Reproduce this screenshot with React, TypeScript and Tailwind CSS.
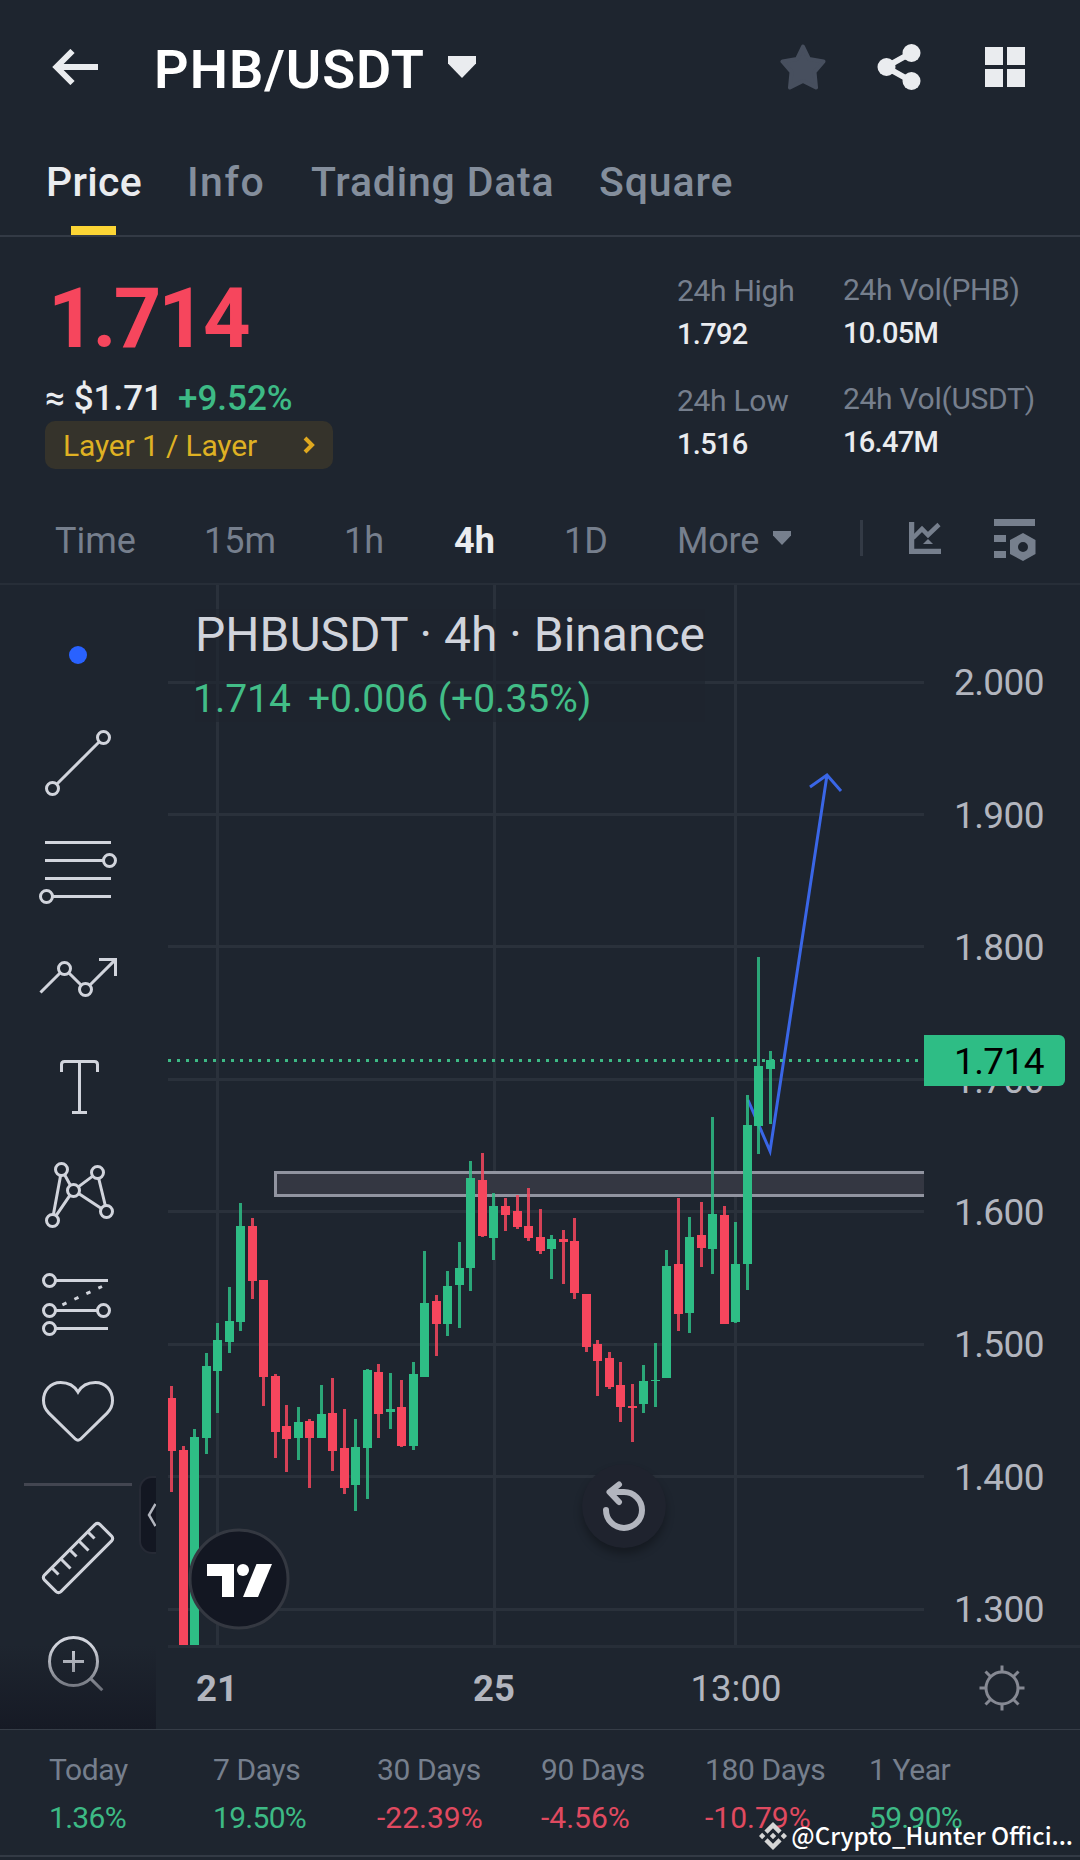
import type { ReactNode } from "react";

const tabs = [
  { label: "Price", cell: "w-[141px]", text: "text-[#eaecef] tracking-[0.3px]" },
  { label: "Info", cell: "w-[124px]", text: "text-[#848e9c] tracking-[1.500px]" },
  { label: "Trading Data", cell: "w-[288px]", text: "text-[#848e9c] tracking-[0.8px]" },
  { label: "Square", cell: "w-[150px]", text: "text-[#848e9c] tracking-[0.9px]" },
];

const performance = [
  { label: "Today", value: "1.36%" },
  { label: "7 Days", value: "19.50%" },
  { label: "30 Days", value: "-22.39%" },
  { label: "90 Days", value: "-4.56%" },
  { label: "180 Days", value: "-10.79%" },
  { label: "1 Year", value: "59.90%" },
];

const priceLevels = ["2.000", "1.900", "1.800", "1.700", "1.600", "1.500", "1.400", "1.300"];
const gridRows = [682.5, 814.5, 946.5, 1079.5, 1211.5, 1344.5, 1476.5, 1609.5];
const gridCols = [217.5, 494.5, 735.5];

// [up, high, body top, body bottom, low]
const candles = [
  [0, 1386, 1398, 1451, 1492],
  [0, 1446, 1450, 1645, 1645],
  [1, 1429, 1437, 1645, 1645],
  [1, 1353, 1366, 1438, 1454],
  [1, 1323, 1340, 1371, 1413],
  [1, 1287, 1321, 1342, 1353],
  [1, 1203, 1226, 1322, 1331],
  [0, 1218, 1226, 1281, 1299],
  [0, 1280, 1280, 1377, 1406],
  [0, 1374, 1376, 1432, 1458],
  [0, 1405, 1426, 1439, 1472],
  [1, 1407, 1422, 1438, 1460],
  [0, 1419, 1421, 1438, 1488],
  [1, 1385, 1414, 1438, 1438],
  [0, 1378, 1413, 1451, 1471],
  [0, 1409, 1448, 1488, 1494],
  [1, 1419, 1447, 1485, 1511],
  [1, 1369, 1370, 1448, 1499],
  [0, 1364, 1372, 1414, 1438],
  [1, 1373, 1409, 1412, 1429],
  [0, 1380, 1407, 1446, 1447],
  [1, 1362, 1374, 1446, 1450],
  [1, 1251, 1303, 1377, 1377],
  [0, 1295, 1301, 1324, 1356],
  [1, 1271, 1286, 1324, 1336],
  [1, 1242, 1268, 1285, 1328],
  [1, 1161, 1178, 1268, 1291],
  [0, 1153, 1180, 1236, 1237],
  [1, 1193, 1206, 1238, 1260],
  [0, 1198, 1206, 1215, 1231],
  [0, 1195, 1211, 1227, 1229],
  [0, 1188, 1226, 1238, 1241],
  [0, 1209, 1237, 1251, 1254],
  [1, 1235, 1239, 1249, 1279],
  [0, 1230, 1239, 1242, 1284],
  [0, 1218, 1241, 1293, 1299],
  [0, 1294, 1294, 1347, 1352],
  [0, 1340, 1344, 1361, 1396],
  [0, 1352, 1358, 1387, 1389],
  [0, 1362, 1385, 1407, 1422],
  [0, 1384, 1406, 1408, 1442],
  [1, 1365, 1381, 1404, 1413],
  [1, 1343, 1380, 1381, 1407],
  [1, 1250, 1266, 1378, 1378],
  [0, 1198, 1264, 1314, 1331],
  [1, 1217, 1237, 1313, 1333],
  [0, 1202, 1235, 1248, 1267],
  [1, 1117, 1214, 1249, 1274],
  [0, 1206, 1215, 1324, 1324],
  [1, 1222, 1264, 1322, 1323],
  [1, 1095, 1125, 1264, 1290],
  [1, 957, 1066, 1126, 1154],
  [1, 1051, 1060, 1069, 1124],
];

const ToolIcon = ({ children }: { children: ReactNode }) => (
  <button className="flex h-[108px] w-full items-center justify-center">
    <svg viewBox="0 0 28 28" className="size-[84px]" fill="none" stroke="#d1d4dc">
      {children}
    </svg>
  </button>
);

const Header = () => (
  <header className="flex h-[138px] items-center">
    <svg viewBox="0 0 46 36" className="mb-1 ml-[52px] h-9 w-[46px]" fill="none" stroke="#eaecef" strokeWidth="6">
      <path d="M46 18H5M20.500 2L4.500 18L20.500 34" />
    </svg>
    <h1 className="ml-[56px] w-[294px] whitespace-nowrap text-[54px] font-semibold tracking-[1px] text-white">PHB/USDT</h1>
    <svg viewBox="0 0 28 22" className="mb-1 h-[22px] w-7" fill="#eaecef">
      <path d="M0 0H28V7.500L14 22L0 7.500Z" />
    </svg>
    <div className="mb-1 ml-auto flex items-center">
      <svg viewBox="0 0 46 46" className="mr-[51px] size-[46px]" fill="#474f5e" stroke="#474f5e" strokeWidth="4" strokeLinejoin="round">
        <path d="M23 2.500L29 15L43.500 17.500L34.500 28L36 43.500L23 37L10 43.500L11.500 28L2.500 17.500L17 15Z" />
      </svg>
      <svg viewBox="0 0 44 46" className="mr-[64px] h-[46px] w-11" fill="#eaecef">
        <path d="M34 9L9 23L34 37" fill="none" stroke="#eaecef" strokeWidth="6" />
        <circle cx="9.500" cy="23" r="9" />
        <circle cx="34.500" cy="9" r="9" />
        <circle cx="34.500" cy="37" r="9" />
      </svg>
      <div className="mr-[55px] grid grid-cols-2 gap-1">
        <i className="size-[18px] bg-[#eaecef]" />
        <i className="size-[18px] bg-[#eaecef]" />
        <i className="size-[18px] bg-[#eaecef]" />
        <i className="size-[18px] bg-[#eaecef]" />
      </div>
    </div>
  </header>
);

const Tabs = () => (
  <nav className="flex border-b-2 border-[#333a45] pl-[46px]">
    {tabs.map((tab, i) => (
      <div key={tab.label} className={tab.cell}>
        <div className="flex h-[88px] items-center whitespace-nowrap pt-[2px] text-[41px] font-medium">
          <span className={tab.text}>{tab.label}</span>
        </div>
        <div className={i === 0 ? "ml-[25px] h-[9px] w-[45px] bg-[#fcd535]" : "h-[9px]"} />
      </div>
    ))}
  </nav>
);

const Stat = ({ label, value }: { label: string; value: string }) => (
  <div className="whitespace-nowrap leading-[43px]">
    <p className="text-[30px] tracking-[-0.3px] text-[#767f8d]">{label}</p>
    <p className="pt-px text-[29px] font-medium tracking-[-0.7px] text-[#eaecef]">{value}</p>
  </div>
);

const Summary = () => (
  <section className="flex h-[260px]">
    <div className="w-[677px] pt-[39px] pl-[45px]">
      <p className="pl-[3px] text-[83px] font-bold leading-[85px] tracking-[-3px] text-[#f6465d]">1.714</p>
      <p className="mt-[17px] flex h-[43px] items-center whitespace-nowrap text-[35px] font-medium text-[#eaecef]">
        ≈ $1.71
        <span className="ml-[15px] text-[#3dba85]">+9.52%</span>
      </p>
      <div className="flex h-12 w-[288px] items-center rounded-[10px] bg-[#35332b] pl-[18px] text-[30px] tracking-[-0.15px] text-[#dfb123]">
        <span className="w-[240px]">Layer 1 / Layer</span>
        <svg viewBox="0 0 12 18" className="h-[18px] w-3" fill="none" stroke="#dfa81f" strokeWidth="4">
          <path d="M2 2L9 9L2 16" />
        </svg>
      </div>
    </div>
    <div className="flex w-[166px] flex-col gap-[23px] pt-[32px]">
      <Stat label="24h High" value="1.792" />
      <Stat label="24h Low" value="1.516" />
    </div>
    <div className="flex flex-col gap-[22px] pt-[31px]">
      <Stat label="24h Vol(PHB)" value="10.05M" />
      <Stat label="24h Vol(USDT)" value="16.47M" />
    </div>
  </section>
);

const Intervals = () => (
  <section className="flex h-[88px] items-center whitespace-nowrap border-b-2 border-[#272e38] pl-[55px] text-[36px] text-[#767f8d]">
    <span className="w-[149px] pt-[2px]">Time</span>
    <span className="w-[140px] pt-[2px]">15m</span>
    <span className="w-[110px] pt-[2px]">1h</span>
    <span className="w-[110px] pt-[2px] font-bold text-[#eaecef]">4h</span>
    <span className="w-[113px] pt-[2px]">1D</span>
    <span className="w-[96px] pt-[2px] tracking-[-0.2px]">More</span>
    <svg viewBox="0 0 18 14" className="mb-1 h-[14px] w-[18px]" fill="#767f8d">
      <path d="M0 0H18V4.500L9 14L0 4.500Z" />
    </svg>
    <i className="mb-1 ml-[69px] h-9 w-[3px] bg-[#333a45]" />
    <svg viewBox="0 0 32 32" className="mb-1 ml-[46px] size-8" fill="none" stroke="#767f8d">
      <path d="M2.500 0V29.500H32" strokeWidth="5.500" />
      <path d="M4 16L13 7L19 13L30 2.500" strokeWidth="4.500" />
      <path d="M14 22L19 17L24 22Z" fill="#767f8d" stroke="none" />
    </svg>
    <svg viewBox="0 0 42 42" className="ml-[53px] size-[42px]" fill="#767f8d">
      <path d="M0 0H41V7H0ZM0 16H12V23H0ZM0 32H12V39H0Z" />
      <path fillRule="evenodd" d="M29 14L41.500 21V35L29 42L16 35V21ZM29 23A5 5 0 1 0 29 33A5 5 0 1 0 29 23Z" />
    </svg>
  </section>
);

const Toolbar = () => (
  <aside className="relative w-[156px] pt-4">
    <div className="flex h-[108px] items-center justify-center">
      <i className="size-[18px] rounded-full bg-[#2962ff]" />
    </div>
    {/* trend line */}
    <ToolIcon>
      <path d="M6.900 21.100L21.100 6.900" />
      <circle cx="5.500" cy="22.500" r="2" />
      <circle cx="22.500" cy="5.500" r="2" />
    </ToolIcon>
    {/* fib levels */}
    <ToolIcon>
      <path d="M3 4.500H25M3 10.500H22.500M3 16.500H25M5.500 22.500H25" />
      <circle cx="24.500" cy="10.500" r="2" />
      <circle cx="3.500" cy="22.500" r="2" />
    </ToolIcon>
    {/* polyline */}
    <ToolIcon>
      <path d="M1.500 18.500L8.100 11.900M10.900 11.900L15.100 16.100M17.900 16.100L26.300 7.700M21 7.500H26.500V13" />
      <circle cx="9.500" cy="10.500" r="2" />
      <circle cx="16.500" cy="17.500" r="2" />
    </ToolIcon>
    {/* text */}
    <ToolIcon>
      <path d="M8.500 9V6.500Q8.500 5.500 9.500 5.500H19.500Q20.500 5.500 20.500 6.500V9M14.500 5.500V22.500M12 22.500H17" />
    </ToolIcon>
    {/* xabcd pattern */}
    <ToolIcon>
      <path d="M8.200 7.500L5.800 20.500M9.500 7.200L11.500 10.800M14.100 11.300L18.900 7.700M20.900 8.500L23.100 17.500M14.200 13.500L21.800 18.500M11.300 14.100L6.700 20.900" />
      <circle cx="8.500" cy="5.500" r="2" />
      <circle cx="20.500" cy="6.500" r="2" />
      <circle cx="12.500" cy="12.500" r="2" />
      <circle cx="5.500" cy="22.500" r="2" />
      <circle cx="23.500" cy="19.500" r="2" />
    </ToolIcon>
    {/* projection */}
    <ToolIcon>
      <path d="M6.500 6.500H24M6.500 16.500H20.500M6.500 22.500H24" />
      <path d="M8.800 14.600L22 8.500" strokeDasharray="1.500 2.900" />
      <circle cx="4.500" cy="6.500" r="2" />
      <circle cx="4.500" cy="16.500" r="2" />
      <circle cx="22.500" cy="16.500" r="2" />
      <circle cx="4.500" cy="22.500" r="2" />
    </ToolIcon>
    {/* favourites */}
    <ToolIcon>
      <path d="M14 7.700C12.800 5.600 10.700 4.500 8.200 4.500C4.800 4.500 2.500 7.200 2.500 10.500C2.500 12.400 3.200 13.600 4.300 14.700L13.200 23.400Q14 24.100 14.800 23.400L23.700 14.700C24.800 13.600 25.500 12.400 25.500 10.500C25.500 7.200 23.200 4.500 19.800 4.500C17.300 4.500 15.200 5.600 14 7.700Z" />
    </ToolIcon>
    <hr className="mx-6 my-[18px] h-[3px] border-0 bg-[#434651]" />
    {/* measure */}
    <ToolIcon>
      <path d="M2.800 19.700L19.700 2.800Q20.500 2.100 21.300 2.800L25.200 6.700Q25.900 7.500 25.200 8.300L8.300 25.200Q7.500 25.900 6.700 25.200L2.800 21.300Q2.100 20.500 2.800 19.700Z" />
      <path d="M5.500 17.500L7.500 19.500M8.500 14.500L11.500 17.500M11.500 11.500L13.500 13.500M14.500 8.500L17.500 11.500M17.500 5.500L19.500 7.500" />
    </ToolIcon>
    {/* zoom in */}
    <ToolIcon>
      <circle cx="12.500" cy="12.500" r="8" />
      <path d="M9 12.500H16M12.500 9V16M18.200 18.200L22.100 22.100" />
    </ToolIcon>
    <div className="absolute bottom-0 left-0 h-[84px] w-full bg-linear-to-b from-transparent to-[#161a25]" />
    <div className="absolute right-0 bottom-[175px] flex h-[78px] w-[17px] items-center justify-end rounded-l-[13px] border-2 border-r-0 border-[#262a35] bg-[#131722]">
      <svg viewBox="0 0 9 24" className="h-6 w-[9px]" fill="none" stroke="#b2b5be" strokeWidth="2.500">
        <path d="M8.500 1L2 12L8.500 23" />
      </svg>
    </div>
  </aside>
);

const CandleChart = () => (
  <div className="relative h-[1060px] w-[768px]">
    <svg viewBox="156 585 768 1060" className="block h-[1060px] w-[768px]">
      <g stroke="#2a313b" strokeWidth="3">
        {gridRows.map((y) => (
          <line key={y} x1="168" x2="924" y1={y} y2={y} />
        ))}
        {gridCols.map((x) => (
          <line key={x} x1={x} x2={x} y1="585" y2="1645" />
        ))}
      </g>
      <rect x="274" y="1171" width="650" height="26" fill="#343742" />
      <path d="M924 1172.500H275.500V1195.500H924" fill="none" stroke="#9194a0" strokeWidth="3" />
      <path d="M748 1100L770 1151L827 775M810 787L827 775L841 791" fill="none" stroke="#3a66e6" strokeWidth="3" />
      <line x1="168" x2="919" y1="1060.500" y2="1060.500" stroke="#3dba85" strokeWidth="3" strokeDasharray="3 6" />
      {candles.map(([up, high, top, bottom, low], i) => {
        const x = Math.floor(171.7 + 11.51 * i);
        return (
          <g key={i} fill={up ? "#2ebd85" : "#f6465d"}>
            <rect x={x - 1} y={high} width="3" height={low - high} opacity="0.85" />
            <rect x={i === 0 ? 168 : x - 4} y={top} width={i === 0 ? 8 : 9} height={bottom - top} />
          </g>
        );
      })}
      <circle cx="239" cy="1579" r="49" fill="#131722" stroke="#343841" strokeWidth="3" />
      <g fill="#fff">
        <path d="M207 1564H234V1597H222V1576H207Z" />
        <circle cx="243" cy="1570" r="6" />
        <path d="M256.500 1564H272L258 1597H243Z" />
      </g>
    </svg>
    <div className="absolute top-[24px] left-[39px] whitespace-nowrap bg-[#1e252f]/60">
      <p className="text-[48px] leading-[52px] text-[#d1d4dc]">PHBUSDT · 4h · Binance</p>
      <p className="mt-[15px] -ml-[2px] text-[39px] leading-[46px] text-[#42bd87]">
        1.714<span className="ml-[17px]">+0.006 (+0.35%)</span>
      </p>
    </div>
    <button className="absolute top-[879px] left-[426px] size-[84px] rounded-full bg-[#1f232e] shadow-[0_6px_8px_rgba(0,0,0,0.3)]">
      <svg viewBox="0 0 84 84" fill="none" stroke="#b2b5be" strokeWidth="6" strokeLinecap="round" strokeLinejoin="round">
        <path d="M24 46A18 18 0 1 0 42 28H28M37 20.500L27.500 28L37 38" />
      </svg>
    </button>
  </div>
);

const PriceAxis = () => (
  <div className="relative h-[1060px] w-[156px] pt-[32px] pl-[30px] text-[37px] tracking-[-0.6px] text-[#b2b5be]">
    {priceLevels.map((level) => (
      <div key={level} className="flex h-[132.400px] items-center">{level}</div>
    ))}
    <div className="absolute top-[450px] left-0 flex h-[51px] w-[141px] items-center rounded-r-[6px] bg-[#2ebd85] pt-[2px] pl-[30px] text-black">
      1.714
    </div>
  </div>
);

const TimeAxis = () => (
  <div className="ml-3 flex h-[83px] items-center border-t-[3px] border-[#272e38] text-center text-[36.500px] text-[#b2b5be]">
    <b className="w-[98px] pt-[2px]">21</b>
    <b className="ml-[179px] w-[98px] pt-[2px]">25</b>
    <span className="ml-[119px] w-[148px] pt-[2px]">13:00</span>
    <svg viewBox="0 0 46 46" className="ml-[169px] size-[46px]" fill="none" stroke="#868993" strokeWidth="3">
      <circle cx="23" cy="23" r="16" />
      <path d="M23 0.500V7M23 39V45.500M0.500 23H7M39 23H45.500M6.500 6.500L12 12M34 34L39.500 39.500M39.500 6.500L34 12M12 34L6.500 39.500" />
    </svg>
  </div>
);

const Performance = () => (
  <section className="relative flex h-[128px] border-t border-b-2 border-t-[#363d47] border-b-[#333a45] pt-4 pl-[49px]">
    {performance.map(({ label, value }) => (
      <div key={label} className="w-[164px] whitespace-nowrap text-[30px] leading-[48px]">
        <p className="tracking-[-0.4px] text-[#767f8d]">{label}</p>
        <p className={value.startsWith("-") ? "text-[#e04a60]" : "tracking-[-0.7px] text-[#3dba85]"}>{value}</p>
      </div>
    ))}
    <div className="absolute right-[7px] bottom-[2px] flex items-center gap-1 whitespace-nowrap font-['Noto_Sans_CJK_SC',sans-serif] text-[24px] font-medium leading-[36px] text-white">
      <svg viewBox="0 0 126.610 126.610" className="mt-[2px] size-7" fill="#d6d6d6">
        <path d="M38.730 53.200L63.310 28.630L87.890 53.210L102.190 38.910L63.310 0L24.430 38.900ZM0 63.310L14.300 49L28.600 63.310L14.300 77.610ZM38.730 73.410L63.310 97.990L87.890 73.400L102.200 87.690L63.310 126.610L24.430 87.710ZM98 63.310L112.300 49L126.600 63.300L112.300 77.610ZM77.830 63.300L63.310 48.780L48.790 63.300L63.310 77.830Z" />
      </svg>
      @Crypto_Hunter Offici...
    </div>
  </section>
);

const App = () => {
  return (
    <main className="h-[1860px] w-[1080px] overflow-hidden bg-[#1e252f] font-[Roboto,sans-serif]">
      <Header />
      <Tabs />
      <Summary />
      <Intervals />
      <section className="flex h-[1144px]">
        <Toolbar />
        <div className="w-[924px]">
          <div className="flex">
            <CandleChart />
            <PriceAxis />
          </div>
          <TimeAxis />
        </div>
      </section>
      <Performance />
    </main>
  );
};

export default App;
